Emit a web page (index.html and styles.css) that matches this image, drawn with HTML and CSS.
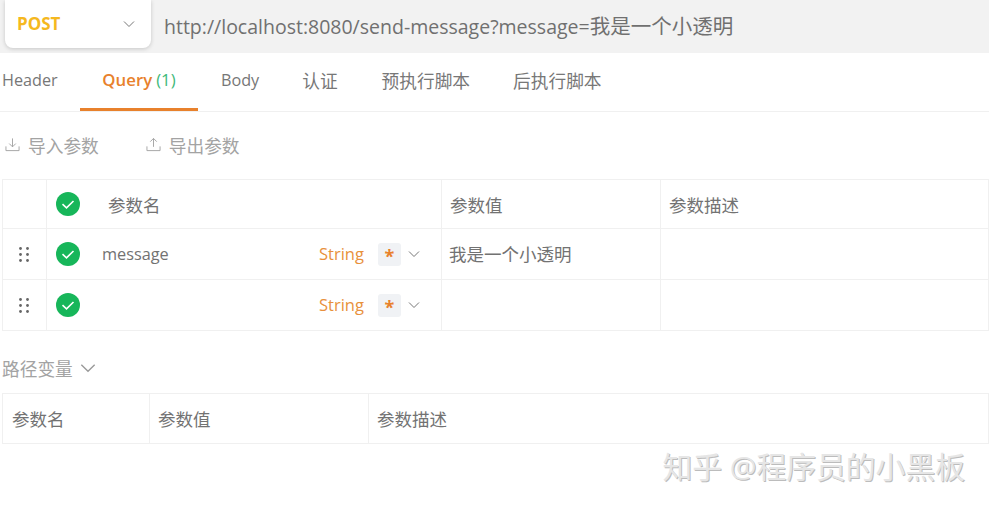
FILE: index.html
```html
<!DOCTYPE html>
<html lang="en">
<head>
    <meta charset="UTF-8">
    <meta name="viewport" content="width=device-width, initial-scale=1.0">
    <title>Query params</title>
    <link rel="stylesheet" href="styles.css">
</head>
<body>
    <svg class="defs" width="0" height="0">
        <symbol id="check" viewBox="0 0 24 24">
            <circle cx="12" cy="12" r="12" fill="#17b65a"/>
            <path d="M6.500 12.200l4 3.600 7-6.800" fill="none" stroke="#fff" stroke-width="1.600"/>
        </symbol>
        <symbol id="chev" viewBox="0 0 12 12">
            <path d="M1 3.500l5 5 5-5" fill="none" stroke="currentColor" stroke-width="1"/>
        </symbol>
        <symbol id="grip" viewBox="0 0 10 15">
            <g fill="#666">
                <circle cx="1.500" cy="1.500" r="1.400"/><circle cx="8.500" cy="1.500" r="1.400"/>
                <circle cx="1.500" cy="7.500" r="1.400"/><circle cx="8.500" cy="7.500" r="1.400"/>
                <circle cx="1.500" cy="13.500" r="1.400"/><circle cx="8.500" cy="13.500" r="1.400"/>
            </g>
        </symbol>
    </svg>

    <div class="url-bar">
        <div class="method">
            <span class="method-name">POST</span>
            <svg class="chev-sm"><use href="#chev"/></svg>
        </div>
        <div class="url">http://localhost:8080/send-message?message=<span class="url-cjk">我是一个小透明</span></div>
    </div>

    <div class="tabs">
        <div class="tab tab-first">Header</div>
        <div class="tab tab-active">Query <span class="count">(1)</span></div>
        <div class="tab tab-body">Body</div>
        <div class="tab tab-auth">认证</div>
        <div class="tab tab-pre">预执行脚本</div>
        <div class="tab tab-post">后执行脚本</div>
    </div>

    <div class="toolbar">
        <span class="tool tool-import">
            <svg class="tool-icon" viewBox="0 0 16 16"><path d="M8 1.500v9M4.500 7l3.500 3.500L11.500 7M1 10v4.500h14V10" fill="none" stroke="currentColor" stroke-width="1"/></svg>
            导入参数
        </span>
        <span class="tool">
            <svg class="tool-icon" viewBox="0 0 16 16"><path d="M8 10.500V1.500M4.500 5L8 1.500 11.500 5M1 10v4.500h14V10" fill="none" stroke="currentColor" stroke-width="1"/></svg>
            导出参数
        </span>
    </div>

    <div class="grid params">
        <div class="cell"></div>
        <div class="cell name-head">
            <svg class="check"><use href="#check"/></svg>
            <span class="head-label">参数名</span>
        </div>
        <div class="cell text-cell">参数值</div>
        <div class="cell text-cell">参数描述</div>

        <div class="cell grip-cell"><svg class="grip"><use href="#grip"/></svg></div>
        <div class="cell name-cell">
            <svg class="check"><use href="#check"/></svg>
            <span class="param-name">message</span>
            <span class="type">String</span>
            <span class="req">*</span>
            <svg class="chev-sm"><use href="#chev"/></svg>
        </div>
        <div class="cell value-cell">我是一个小透明</div>
        <div class="cell"></div>

        <div class="cell grip-cell"><svg class="grip"><use href="#grip"/></svg></div>
        <div class="cell name-cell">
            <svg class="check"><use href="#check"/></svg>
            <span class="param-name"></span>
            <span class="type">String</span>
            <span class="req">*</span>
            <svg class="chev-sm"><use href="#chev"/></svg>
        </div>
        <div class="cell"></div>
        <div class="cell"></div>
    </div>

    <div class="path-title">路径变量 <svg class="chev-lg"><use href="#chev"/></svg></div>

    <div class="grid path-vars">
        <div class="cell plain-cell">参数名</div>
        <div class="cell text-cell">参数值</div>
        <div class="cell text-cell">参数描述</div>
    </div>

    <div class="watermark">知乎 @程序员的小黑板</div>
</body>
</html>
```

FILE: styles.css
```css
* {
    box-sizing: border-box;
}

body {
    margin: 0;
    height: 508px;
    overflow: hidden;
    background: #fff;
    color: #666;
    font-family: "Open Sans", "Noto Sans CJK SC", sans-serif;
}

.defs {
    position: absolute;
}

.url-bar {
    display: flex;
    align-items: center;
    height: 53px;
    background: #f2f2f2;
}

.method {
    display: flex;
    align-items: center;
    justify-content: space-between;
    width: 146px;
    height: 48px;
    margin: 0 13px 5px 5px;
    padding: 0 16px 0 12px;
    background: #fff;
    border-radius: 0 0 8px 8px;
    box-shadow: 0 1px 4px rgba(0, 0, 0, 0.18);
}

.method-name {
    padding-bottom: 1px;
    font-size: 17px;
    font-weight: 700;
    color: #f5b81f;
}

.url {
    margin-bottom: 4px;
    font-size: 19.500px;
    color: #707070;
}

.url-cjk {
    font-size: 20.500px;
}

.chev-sm {
    width: 12px;
    height: 12px;
    color: #777;
}

.tabs {
    display: flex;
    height: 59px;
    border-bottom: 1px solid #f0f0f0;
    font-size: 17.700px;
}

.tab {
    display: flex;
    align-items: center;
    gap: 4px;
    height: 58px;
    padding-bottom: 4px;
    white-space: nowrap;
    color: #777;
}

.tab-first {
    width: 80px;
    padding-left: 2px;
    font-size: 16.200px;
}

.tab-active {
    justify-content: center;
    width: 118px;
    padding-bottom: 3px;
    color: #e8812c;
    font-size: 16.800px;
    font-weight: 600;
    border-bottom: 3px solid #e8812c;
}

.count {
    color: #3fb97a;
    font-weight: 400;
}

.tab-body {
    margin-left: 23px;
    font-size: 16.200px;
}

.tab-auth {
    margin-left: 43px;
}

.tab-pre {
    margin-left: 44px;
}

.tab-post {
    margin-left: 43px;
}

.toolbar {
    display: flex;
    align-items: center;
    height: 67px;
    padding-left: 5px;
    padding-bottom: 2px;
    font-size: 17.700px;
    color: #a3a3a3;
}

.tool {
    display: flex;
    align-items: center;
    gap: 8px;
}

.tool-import {
    margin-right: 47px;
}

.tool-icon {
    width: 15px;
    height: 15px;
}

.grid {
    display: grid;
    margin-left: 2px;
    border-top: 1px solid #f0f0f0;
    font-size: 17.500px;
    color: #727272;
}

.params {
    grid-template-columns: 45px 395px 219px 328px;
    grid-template-rows: 49px 51px 51px;
}

.path-vars {
    grid-template-columns: 148px 219px 620px;
    grid-template-rows: 50px;
}

.cell {
    display: flex;
    align-items: center;
    border-bottom: 1px solid #f0f0f0;
    border-right: 1px solid #f0f0f0;
}

.cell:nth-child(4n + 1),
.path-vars .cell:first-child {
    border-left: 1px solid #f0f0f0;
}

.grip-cell {
    justify-content: center;
    padding-right: 1px;
}

.grip {
    width: 10px;
    height: 15px;
}

.check {
    flex: none;
    width: 24px;
    height: 24px;
}

.name-head,
.name-cell {
    padding-left: 9px;
}

.head-label {
    margin-left: 28px;
}

.param-name {
    width: 217px;
    margin-left: 22px;
    font-size: 16.300px;
}

.type {
    width: 59px;
    padding-bottom: 2px;
    color: #e8913c;
    font-size: 16.500px;
}

.req {
    display: flex;
    justify-content: center;
    width: 23px;
    height: 23px;
    border-radius: 3px;
    background: #f0f2f5;
    color: #e8812c;
    font-size: 18px;
    font-weight: 700;
    line-height: 27px;
}

.name-cell .chev-sm {
    margin-left: 7px;
}

.text-cell {
    padding-left: 8px;
}

.value-cell {
    padding-left: 7px;
    padding-bottom: 2px;
}

.plain-cell {
    padding-left: 9px;
}

.path-title {
    display: flex;
    align-items: center;
    gap: 7px;
    height: 62px;
    padding-left: 2px;
    padding-top: 12px;
    font-size: 17.700px;
    color: #a3a3a3;
}

.chev-lg {
    width: 16px;
    height: 16px;
    color: #999;
}

.watermark {
    margin: 5px 24px 0 0;
    text-align: right;
    font-size: 29.800px;
    line-height: 36px;
    color: #e6e6e6;
    text-shadow: 1px 1px 0 #bcbcbc;
}
```
